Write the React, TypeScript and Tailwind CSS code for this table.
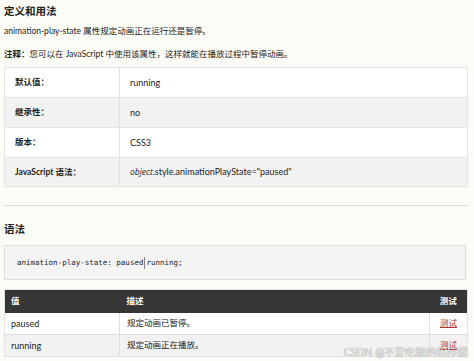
const props = [
  { name: "默认值：", value: "running" },
  { name: "继承性：", value: "no" },
  { name: "版本：", value: "CSS3" },
];

const values = [
  { value: "paused", desc: "规定动画已暂停。" },
  { value: "running", desc: "规定动画正在播放。" },
];

export default function App() {
  return (
    <main
      className="relative h-[361px] w-[474px] overflow-hidden bg-[#fcfcf7] text-[8.5px] text-[#222]"
      style={{ fontFamily: 'Lato, "Noto Sans CJK SC", sans-serif' }}
    >
      <div className="w-[468px] pl-[4px]">
        <h2 className="pt-[4px] text-[10.5px] font-bold leading-[14px]">定义和用法</h2>
        <p className="mt-[7px] leading-[12px]">animation-play-state 属性规定动画正在运行还是暂停。</p>
        <p className="mt-[11px] leading-[12px]">
          <b>注释：</b>您可以在 JavaScript 中使用该属性，这样就能在播放过程中暂停动画。
        </p>

        <table className="mt-[7px] w-[464px] border-collapse border border-[#e3e3e3] text-[9px]">
          <tbody>
            {props.map((p, i) => (
              <tr key={p.name} className={i % 2 ? "bg-[#f2f2f2]" : "bg-white"}>
                <th className="h-[30px] w-[115px] border-r border-b border-[#e3e3e3] pl-[10px] text-left text-[8.5px] font-bold">
                  {p.name}
                </th>
                <td className="border-b border-[#e3e3e3] pl-[10px]">{p.value}</td>
              </tr>
            ))}
            <tr className="bg-[#f2f2f2]">
              <th className="h-[29px] border-r border-[#e3e3e3] pl-[10px] text-left text-[8.5px] font-bold">JavaScript 语法：</th>
              <td className="pl-[10px]">
                <em className="font-['Open_Sans'] text-[8.5px] italic">object</em>.style.animationPlayState="paused"
              </td>
            </tr>
          </tbody>
        </table>

        <hr className="mt-[18px] border-t border-[#dcdcd6]" />

        <h2 className="mt-[16px] text-[10.5px] font-bold leading-[14px]">语法</h2>

        <div
          className="mt-[9px] flex h-[35px] w-[462px] items-center border border-[#dedede] bg-[#f4f4f4] pl-[12px] text-[7.5px]"
          style={{ fontFamily: '"DejaVu Sans Mono", monospace' }}
        >
          animation-play-state: paused<span className="mx-[1px] h-[12px] border-l border-[#888]" />running;
        </div>

        <table className="mt-[9px] w-[464px] border-collapse border border-[#e3e3e3]">
          <thead>
            <tr className="bg-[#363636] text-white">
              <th className="h-[23px] w-[115px] pl-[6px] text-left font-bold">值</th>
              <th className="pl-[7px] text-left font-bold">描述</th>
              <th className="w-[38px] text-center font-bold">测试</th>
            </tr>
          </thead>
          <tbody>
            {values.map((v, i) => (
              <tr key={v.value} className={i % 2 ? "bg-[#f2f2f2]" : "bg-white"}>
                <td className="h-[22px] border-r border-b border-[#dedede] pl-[6px] text-[9px]">{v.value}</td>
                <td className="border-r border-b border-[#dedede] pl-[7px]">{v.desc}</td>
                <td className="border-b border-[#dedede] text-center">
                  <a href="#" className="text-[#a33] underline">测试</a>
                </td>
              </tr>
            ))}
          </tbody>
        </table>
      </div>

      <div
        className="absolute right-[6px] bottom-[3px] text-[10.5px] leading-[12px] text-[#e8e8e8]"
        style={{ textShadow: "0 0 1px #777" }}
      >
        CSDN @不爱吃糖的程序媛
      </div>
    </main>
  );
}
